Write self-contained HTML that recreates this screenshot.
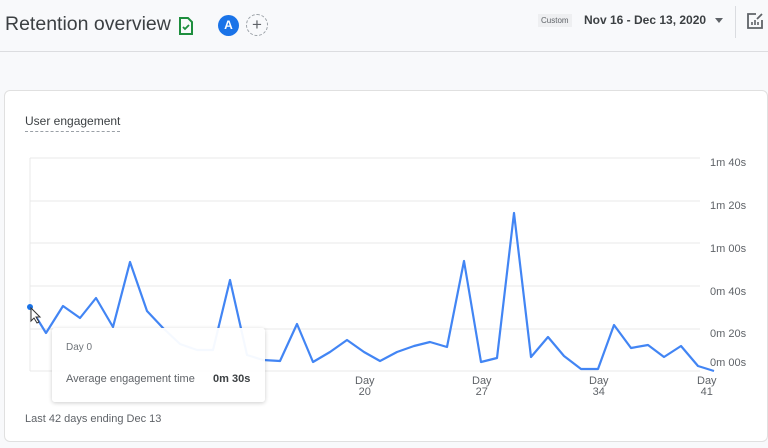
<!DOCTYPE html>
<html><head><style>
body{margin:0;width:768px;height:448px;background:#f8f9fb;font-family:"Liberation Sans",sans-serif;position:relative;overflow:hidden}
.hdr{position:absolute;left:0;top:0;width:768px;height:51px;border-bottom:1px solid #dcdde0;background:#f8f9fb}
.t{position:absolute;left:5px;top:13px;font-size:19.5px;color:#3c4043}
.card{position:absolute;left:4px;top:90px;width:762px;height:350px;background:#fff;border:1px solid #e0e0e0;border-radius:6px}
.lbl{position:absolute;font-size:11px;color:#5f6368}
</style></head><body>
<div class="hdr">
<div class="t">Retention overview</div>
<svg style="position:absolute;left:178px;top:17px" width="16" height="18" viewBox="0 0 16 18"><path d="M2 1h8l4 4v12H2z" fill="none" stroke="#1e8e3e" stroke-width="2"/><path d="M5 10l2 2 4-4" fill="none" stroke="#1e8e3e" stroke-width="1.8"/></svg>
<div style="position:absolute;left:218px;top:15px;width:21px;height:21px;border-radius:50%;background:#1a73e8;color:#fff;font-size:12px;font-weight:bold;text-align:center;line-height:21px">A</div>
<div style="position:absolute;left:246px;top:14px;width:20px;height:20px;border-radius:50%;border:1px dashed #9aa0a6;color:#5f6368;font-size:17px;text-align:center;line-height:19px">+</div>
<div style="position:absolute;left:538px;top:14px;background:#eeeff1;font-size:8px;color:#5f6368;padding:2px 3px">Custom</div>
<div style="position:absolute;left:584px;top:13px;font-size:12px;font-weight:bold;color:#3c4043">Nov 16 - Dec 13, 2020</div>
<div style="position:absolute;left:715px;top:18px;width:0;height:0;border-left:4px solid transparent;border-right:4px solid transparent;border-top:5px solid #5f6368"></div>
<div style="position:absolute;left:735px;top:6px;width:1px;height:32px;background:#dadce0"></div>
<svg style="position:absolute;left:746px;top:12px" width="18" height="18" viewBox="0 0 18 18"><path d="M10 2H2v14h14V8" fill="none" stroke="#5f6368" stroke-width="1.8"/><path d="M6 13V10M9 13V8M12 13V10" stroke="#5f6368" stroke-width="1.6"/><path d="M11 7l5-5" stroke="#5f6368" stroke-width="1.8"/></svg>
</div>
<div class="card"></div>
<div style="position:absolute;left:25px;top:114px;font-size:12px;color:#3c4043;border-bottom:1px dashed #9aa0a6;padding-bottom:3px">User engagement</div>
<svg style="position:absolute;left:0;top:0" width="768" height="448">
<g stroke="#e8e8e8" stroke-width="1">
<line x1="30" y1="158" x2="700" y2="158"/><line x1="30" y1="201" x2="700" y2="201"/><line x1="30" y1="243" x2="700" y2="243"/><line x1="30" y1="286" x2="700" y2="286"/><line x1="30" y1="329" x2="700" y2="329"/><line x1="30" y1="371" x2="700" y2="371"/><line x1="30" y1="158" x2="30" y2="371"/>
</g>
<polyline fill="none" stroke="#4285f4" stroke-width="2.2" stroke-linejoin="round" points="30,307 46,333 63,306 80,318 96,298 113,327 130,262 147,311 163,328 180,344 197,350 213,350 230,280 247,355 263,360 280,361 297,324 313,362 330,352 347,340 364,352 380,361 397,352 414,346 430,342 447,347 464,261 481,362 497,358 514,213 531,357 548,337 564,356 581,369 598,369 614,325 631,348 648,345 664,357 681,346 698,366 714,371"/>
<circle cx="30" cy="307" r="3" fill="#1a73e8"/>
<path d="M31 308l0 13 3-3 3 5 2-1-3-5 4 0z" fill="#fff" stroke="#333" stroke-width="1"/>
</svg>
<div class="lbl" style="left:710px;top:157px">1m 40s</div>
<div class="lbl" style="left:710px;top:200px">1m 20s</div>
<div class="lbl" style="left:710px;top:243px">1m 00s</div>
<div class="lbl" style="left:710px;top:286px">0m 40s</div>
<div class="lbl" style="left:710px;top:328px">0m 20s</div>
<div class="lbl" style="left:710px;top:357px">0m 00s</div>
<div class="lbl" style="left:355px;top:376px;text-align:center;line-height:11px">Day<br>20</div>
<div class="lbl" style="left:472px;top:376px;text-align:center;line-height:11px">Day<br>27</div>
<div class="lbl" style="left:589px;top:376px;text-align:center;line-height:11px">Day<br>34</div>
<div class="lbl" style="left:697px;top:376px;text-align:center;line-height:11px">Day<br>41</div>
<div style="position:absolute;left:52px;top:328px;width:213px;height:74px;background:rgba(255,255,255,0.95);box-shadow:0 1px 4px rgba(0,0,0,0.2);border-radius:3px">
<div style="position:absolute;left:14px;top:14px;font-size:10px;color:#70757a">Day 0</div>
<div style="position:absolute;left:14px;top:45px;font-size:11px;color:#5f6368">Average engagement time</div>
<div style="position:absolute;left:161px;top:45px;font-size:11px;font-weight:bold;color:#3c4043">0m 30s</div>
</div>
<div style="position:absolute;left:25px;top:413px;font-size:11px;color:#5f6368">Last 42 days ending Dec 13</div>
</body></html>
